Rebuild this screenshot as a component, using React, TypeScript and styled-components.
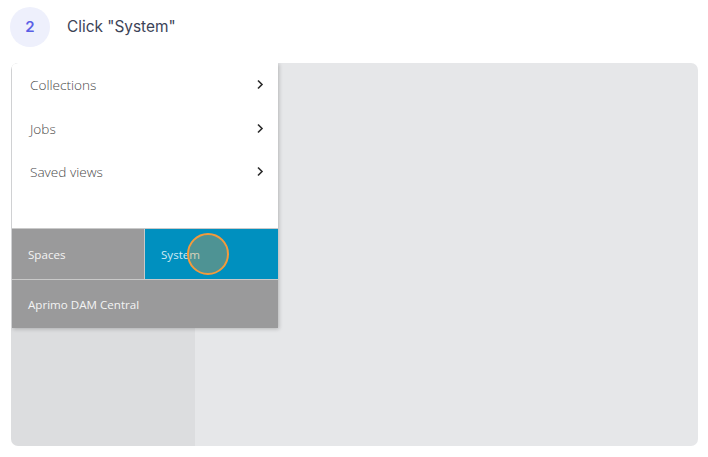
import React from "react";
import styled, { createGlobalStyle } from "styled-components";

const Global = createGlobalStyle`
  html, body { margin: 0; padding: 0; background: #ffffff; }
  body { width: 708px; height: 457px; overflow: hidden; }
`;

interface Iitem {
  label: string;
}

const items: Iitem[] = [
  { label: "Collections" },
  { label: "Jobs" },
  { label: "Saved views" },
];

const Chevron = () => (
  <svg width="8" height="11" viewBox="0 0 8 11">
    <path d="M2 1.5 L6 5.5 L2 9.5" fill="none" stroke="#2b2b2b" strokeWidth="1.6" />
  </svg>
);

const App: React.FC = () => {
  return (
    <Page>
      <Global />
      <Header>
        <Badge>2</Badge>
        <Title>Click "System"</Title>
      </Header>
      <Panel>
        <Sidebar />
        <Main />
        <Menu>
          <List>
            {items.map((it) => (
              <Item key={it.label}>
                <span>{it.label}</span>
                <Chevron />
              </Item>
            ))}
          </List>
          <Tiles>
            <Tile>Spaces</Tile>
            <Tile active>
              System
              <Pointer />
            </Tile>
            <Tile wide>Aprimo DAM Central</Tile>
          </Tiles>
        </Menu>
      </Panel>
    </Page>
  );
};

export default App;

const Page = styled.div`
  width: 708px;
  height: 457px;
  font-family: Inter, "Liberation Sans", sans-serif;
`;

const Header = styled.div`
  display: flex;
  align-items: center;
  height: 52px;
  padding-left: 10px;
`;

const Badge = styled.div`
  width: 40px;
  height: 40px;
  border-radius: 50%;
  background: #eef0fc;
  color: #5a5fe6;
  font-size: 15px;
  font-weight: 600;
  display: flex;
  align-items: center;
  justify-content: center;
  margin-top: 1px;
`;

const Title = styled.div`
  margin-left: 17px;
  font-size: 15.4px;
  color: #3c4357;
`;

const Panel = styled.div`
  position: relative;
  margin: 11px 0 0 11px;
  width: 687px;
  height: 383px;
  border-radius: 7px;
  overflow: hidden;
  display: grid;
  grid-template-columns: 184px 1fr;
`;

const Sidebar = styled.div`
  background: #dcdddf;
`;

const Main = styled.div`
  background: #e6e7e9;
`;

const Menu = styled.div`
  position: absolute;
  left: 1px;
  top: 0;
  width: 266px;
  height: 265px;
  background: #ffffff;
  box-shadow: 1px 1px 4px rgba(0, 0, 0, 0.22);
  display: flex;
  flex-direction: column;
  justify-content: space-between;
  font-family: "Open Sans", "Liberation Sans", sans-serif;
`;

const List = styled.div`
  display: flex;
  flex-direction: column;
`;

const Item = styled.div`
  height: 43.5px;
  display: flex;
  align-items: center;
  justify-content: space-between;
  padding: 0 14px 0 18px;
  font-size: 13.6px;
  font-weight: 300;
  color: #4a4a4a;
`;

const Tiles = styled.div`
  display: grid;
  grid-template-columns: 132px 1fr;
  grid-template-rows: 50px 48px;
  gap: 1px;
  background: #c9c9c9;
  padding-top: 1px;
`;

const Tile = styled.div<{ active?: boolean; wide?: boolean }>`
  position: relative;
  display: flex;
  align-items: center;
  padding-left: 16px;
  font-size: 11.6px;
  color: ${({ active }) => (active ? "#cfeaf4" : "#f4f4f4")};
  background: ${({ active }) => (active ? "#0090bf" : "#9a9a9b")};
  grid-column: ${({ wide }) => (wide ? "1 / span 2" : "auto")};
`;

const Pointer = styled.div`
  position: absolute;
  left: 42px;
  top: 4px;
  width: 38px;
  height: 38px;
  border-radius: 50%;
  border: 2px solid #f39a3b;
  background: rgba(243, 154, 59, 0.32);
`;
